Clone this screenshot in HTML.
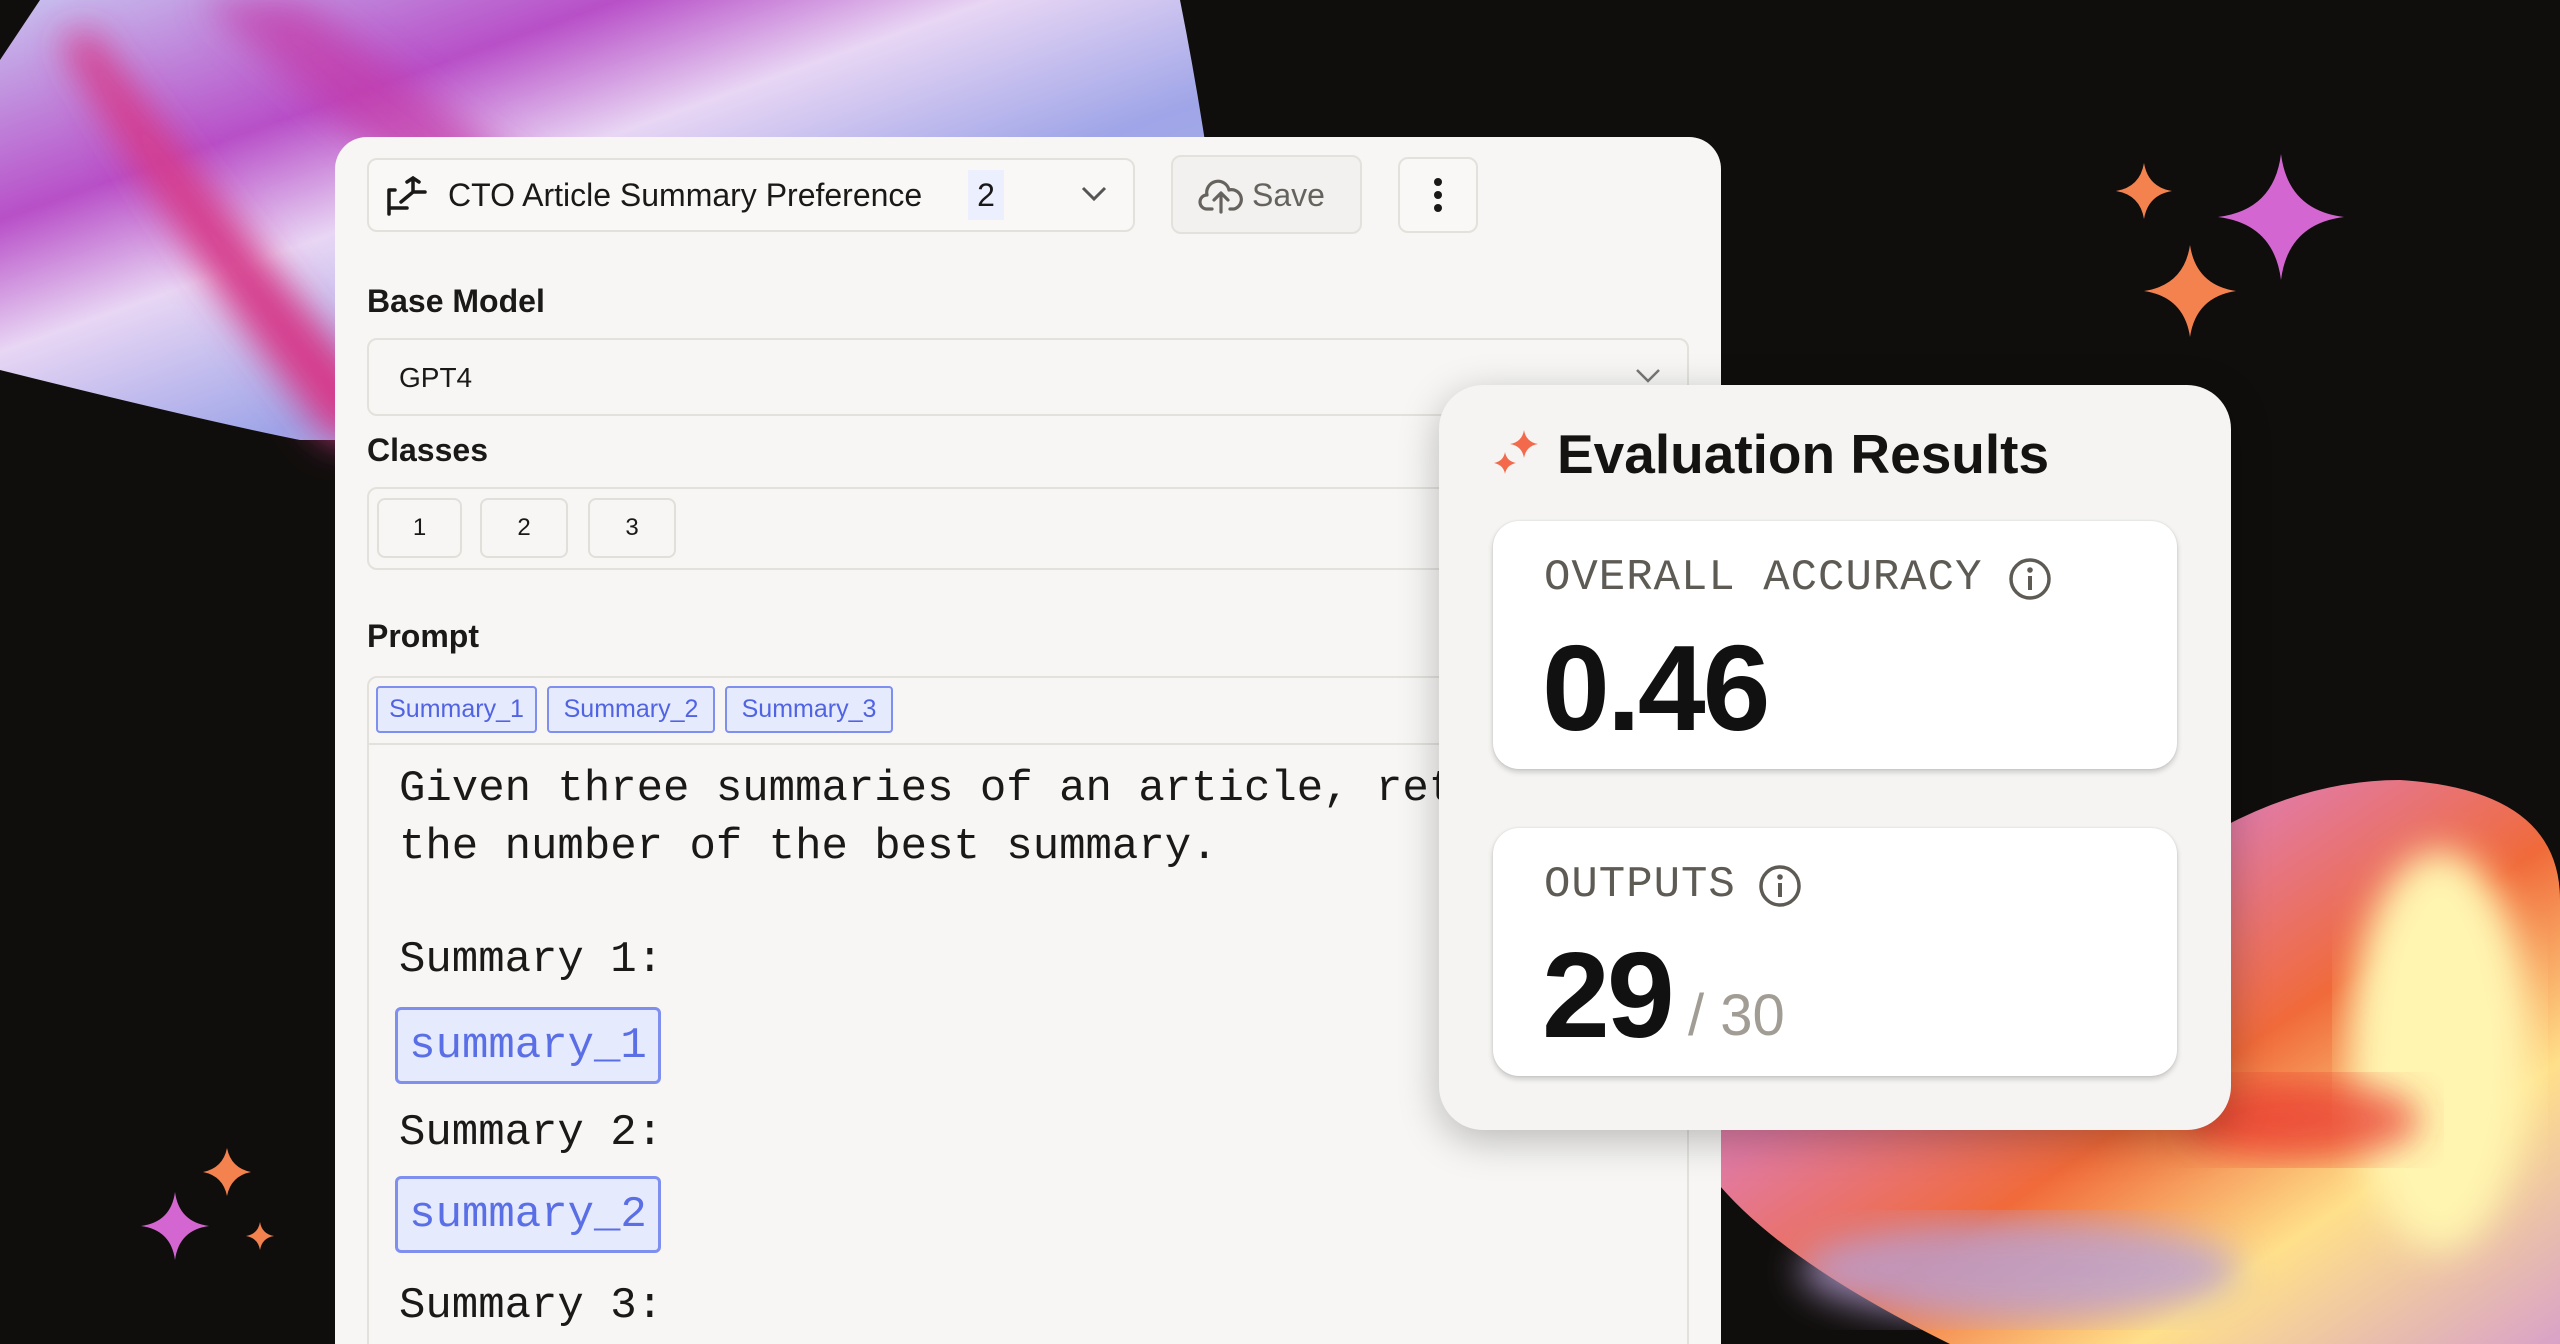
<!DOCTYPE html>
<html><head><meta charset="utf-8"><style>
*{box-sizing:border-box;margin:0;padding:0}
html,body{width:2560px;height:1344px;overflow:hidden}
body{background:#100e0c;position:relative;font-family:"Liberation Sans",sans-serif;color:#1a1917}
.abs{position:absolute}
.panel{left:335px;top:137px;width:1386px;height:1207px;background:#f7f6f4;border-radius:32px 32px 0 0}
.box{border:2px solid #e3e1dc;border-radius:10px;background:#f7f6f4}
.lbl{font-size:32px;font-weight:bold;color:#1a1917}
.chip{border:2px solid #e1dfda;border-radius:8px;background:#f7f6f4;font-size:24px;display:flex;align-items:center;justify-content:center}
.tag{border:2px solid #7e8ff0;background:#e6eafd;color:#4f63e3;border-radius:4px;font-size:25px;display:flex;align-items:center;justify-content:center}
.mono{font-family:"Liberation Mono",monospace;font-size:44px;color:#1a1917;white-space:pre}
.var{border:3px solid #7e8ff0;background:#e6eafd;color:#5a6ee6;border-radius:6px;font-family:"Liberation Mono",monospace;font-size:44px;display:flex;align-items:center;justify-content:center}
.eval{left:1439px;top:385px;width:792px;height:745px;background:#f5f4f2;border-radius:44px;box-shadow:0 10px 40px rgba(0,0,0,.25)}
.card{background:#fff;border-radius:26px;box-shadow:0 3px 6px rgba(0,0,0,.18),0 0 2px rgba(0,0,0,.1)}
.cap{font-family:"Liberation Mono",monospace;font-size:44px;color:#5e5b55;letter-spacing:1px}
.big{font-weight:bold;color:#111;font-size:122px;letter-spacing:-3px}
</style></head><body>
<svg class="abs" style="left:0;top:0" width="2560" height="1344">
<defs>
<linearGradient id="g1" x1="0" y1="0" x2="1" y2="1">
<stop offset="0" stop-color="#c8c4f0"/><stop offset=".25" stop-color="#b84fc8"/><stop offset=".4" stop-color="#e8d6f4"/><stop offset=".6" stop-color="#9fa5e8"/><stop offset="1" stop-color="#b9c3dc"/></linearGradient>
<linearGradient id="g2" x1="0" y1="0" x2="1" y2="1">
<stop offset="0" stop-color="#c9a3e0"/><stop offset=".35" stop-color="#e27aa0"/><stop offset=".55" stop-color="#f06a3a"/><stop offset=".75" stop-color="#ffe08a"/><stop offset="1" stop-color="#d8a2c8"/></linearGradient>
<filter id="b"><feGaussianBlur stdDeviation="18"/></filter>
</defs>
<path d="M40 0 L1180 0 Q1220 200 1240 440 L300 440 Q200 420 0 370 L0 60 Z" fill="url(#g1)"/>
<path d="M90 30 Q250 250 420 440 L330 440 Q180 250 60 40Z" fill="#d63a8a" filter="url(#b)"/>
<path d="M300 0 Q500 150 700 300 L600 330 Q400 180 200 0Z" fill="#c43aa8" opacity=".7" filter="url(#b)"/>
<path d="M1715 1120 Q1800 1060 2000 1020 Q2200 780 2400 780 Q2560 790 2560 900 L2560 1344 L1950 1344 Q1780 1260 1715 1180Z" fill="url(#g2)"/>
<ellipse cx="2440" cy="1050" rx="90" ry="200" fill="#fff4b0" filter="url(#b)"/>
<ellipse cx="2300" cy="1120" rx="120" ry="40" fill="#e8302a" opacity=".7" filter="url(#b)"/>
<ellipse cx="2020" cy="1270" rx="220" ry="50" fill="#b8a0d6" opacity=".8" filter="url(#b)"/>
<g fill="#f4824f">
<path d="M2144 163 Q2148 187 2172 191 Q2148 195 2144 219 Q2140 195 2116 191 Q2140 187 2144 163Z"/>
<path d="M2190 245 Q2196 285 2236 291 Q2196 297 2190 337 Q2184 297 2144 291 Q2184 285 2190 245Z"/>
<path d="M227 1148 Q231 1168 251 1172 Q231 1176 227 1196 Q223 1176 203 1172 Q223 1168 227 1148Z"/>
<path d="M260 1222 Q262 1234 274 1236 Q262 1238 260 1250 Q258 1238 246 1236 Q258 1234 260 1222Z"/>
</g>
<g fill="#d466d2">
<path d="M2281 154 Q2288 210 2344 217 Q2288 224 2281 280 Q2274 224 2218 217 Q2274 210 2281 154Z"/>
<path d="M175 1192 Q179 1222 209 1226 Q179 1230 175 1260 Q171 1230 141 1226 Q171 1222 175 1192Z"/>
</g>
</svg>

<div class="abs panel"></div>
<div class="abs box" style="left:367px;top:158px;width:768px;height:74px;background:#f9f8f6"></div>
<svg class="abs" style="left:385px;top:174px" width="44" height="42" viewBox="0 0 44 42" fill="none" stroke="#1a1917" stroke-width="3.5" stroke-linecap="round"><path d="M4 40 V16 M4 16 H10 M4 34 H22 M16 28 L28 18 L28 4 M22 8 L28 4 L34 8 M28 18 H40"/></svg>
<div class="abs" style="left:448px;top:173px;font-size:32px;line-height:44px">CTO Article Summary Preference</div>
<div class="abs" style="left:968px;top:170px;width:36px;height:50px;background:#eceffd;font-size:32px;line-height:50px;text-align:center">2</div>
<svg class="abs" style="left:1080px;top:184px" width="28" height="20"><path d="M3 4 L14 15 L25 4" fill="none" stroke="#555" stroke-width="3"/></svg>
<div class="abs box" style="left:1171px;top:155px;width:191px;height:79px;background:#f2f1ef"></div>
<svg class="abs" style="left:1198px;top:176px" width="46" height="38" viewBox="0 0 46 38" fill="none" stroke="#66635e" stroke-width="3.2" stroke-linecap="round" stroke-linejoin="round"><path d="M14 33 H9 A7 7 0 0 1 9 19 A11 11 0 0 1 31 14 A8 8 0 0 1 36 33 H32 M23 36 V18 M16 24 L23 17 L30 24"/></svg>
<div class="abs" style="left:1252px;top:173px;font-size:32px;color:#66635e;line-height:44px">Save</div>
<div class="abs box" style="left:1398px;top:157px;width:80px;height:76px;background:#f9f8f6"></div>
<div class="abs" style="left:1434px;top:178px;width:8px;height:8px;border-radius:50%;background:#1a1917;box-shadow:0 13px 0 #1a1917,0 26px 0 #1a1917"></div>

<div class="abs lbl" style="left:367px;top:283px">Base Model</div>
<div class="abs box" style="left:367px;top:338px;width:1322px;height:78px"></div>
<div class="abs" style="left:399px;top:362px;font-size:28px">GPT4</div>
<svg class="abs" style="left:1634px;top:366px" width="28" height="20"><path d="M3 4 L14 15 L25 4" fill="none" stroke="#777" stroke-width="2.5"/></svg>

<div class="abs lbl" style="left:367px;top:432px">Classes</div>
<div class="abs box" style="left:367px;top:487px;width:1322px;height:83px"></div>
<div class="abs chip" style="left:377px;top:498px;width:85px;height:60px">1</div>
<div class="abs chip" style="left:480px;top:498px;width:88px;height:60px">2</div>
<div class="abs chip" style="left:588px;top:498px;width:88px;height:60px">3</div>

<div class="abs lbl" style="left:367px;top:618px">Prompt</div>
<div class="abs box" style="left:367px;top:676px;width:1322px;height:700px"></div>
<div class="abs" style="left:369px;top:743px;width:1318px;height:2px;background:#e3e1dc"></div>
<div class="abs tag" style="left:376px;top:686px;width:161px;height:47px">Summary_1</div>
<div class="abs tag" style="left:547px;top:686px;width:168px;height:47px">Summary_2</div>
<div class="abs tag" style="left:725px;top:686px;width:168px;height:47px">Summary_3</div>
<div class="abs mono" style="left:399px;top:760px;line-height:58px">Given three summaries of an article, return
the number of the best summary.</div>
<div class="abs mono" style="left:399px;top:935px">Summary 1:</div>
<div class="abs var" style="left:395px;top:1007px;width:266px;height:77px">summary_1</div>
<div class="abs mono" style="left:399px;top:1108px">Summary 2:</div>
<div class="abs var" style="left:395px;top:1176px;width:266px;height:77px">summary_2</div>
<div class="abs mono" style="left:399px;top:1281px">Summary 3:</div>

<div class="abs eval"></div>
<svg class="abs" style="left:1492px;top:428px" width="50" height="50" viewBox="0 0 50 50" fill="#f26a4b"><path d="M32 2 Q34 14 46 16 Q34 18 32 30 Q30 18 18 16 Q30 14 32 2Z"/><path d="M13 24 Q14.5 33 24 35 Q14.5 37 13 46 Q11.5 37 2 35 Q11.5 33 13 24Z"/></svg>
<div class="abs" style="left:1557px;top:420px;font-size:55px;font-weight:bold;color:#141311;line-height:68px">Evaluation Results</div>
<div class="abs card" style="left:1493px;top:521px;width:684px;height:248px"></div>
<div class="abs cap" style="left:1544px;top:553px">OVERALL ACCURACY</div>
<svg class="abs" style="left:2007px;top:556px" width="46" height="46"><circle cx="23" cy="23" r="19" fill="none" stroke="#5e5b55" stroke-width="3.5"/><circle cx="23" cy="14" r="2.8" fill="#5e5b55"/><rect x="21" y="20" width="4" height="14" fill="#5e5b55"/></svg>
<div class="abs big" style="left:1542px;top:618px">0.46</div>
<div class="abs card" style="left:1493px;top:828px;width:684px;height:248px"></div>
<div class="abs cap" style="left:1544px;top:860px">OUTPUTS</div>
<svg class="abs" style="left:1757px;top:863px" width="46" height="46"><circle cx="23" cy="23" r="19" fill="none" stroke="#5e5b55" stroke-width="3.5"/><circle cx="23" cy="14" r="2.8" fill="#5e5b55"/><rect x="21" y="20" width="4" height="14" fill="#5e5b55"/></svg>
<div class="abs big" style="left:1542px;top:925px">29</div>
<div class="abs" style="left:1688px;top:982px;font-size:58px;color:#a19d95">/ 30</div>
</body></html>
